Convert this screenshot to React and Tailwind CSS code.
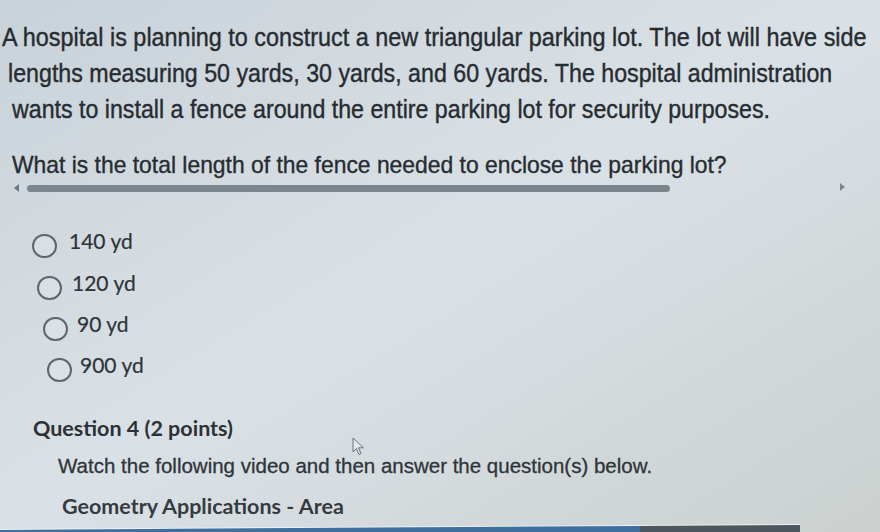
import React from "react";

const options = [
  { label: "140 yd", circle: "ml-[32px]", text: "ml-[12px]", top: "mt-[42px]" },
  { label: "120 yd", circle: "ml-[37px]", text: "ml-[10px]", top: "mt-[18px]" },
  { label: "90 yd", circle: "ml-[43px]", text: "ml-[9px]", top: "mt-[17px]" },
  { label: "900 yd", circle: "ml-[47px]", text: "ml-[8px]", top: "mt-[17px]" },
];

function Radio() {
  return (
    <span className="block w-[25px] h-[24px] shrink-0 rounded-full border-2 border-[#5f666c] bg-[#e3e8ec]/40"></span>
  );
}

export default function App() {
  return (
    <div className="relative w-[880px] h-[532px] overflow-hidden bg-linear-to-br from-[#c9d2d9] via-[#dae1e6] to-[#cbd0cf] text-[#272c31] font-['Liberation_Sans',Arial,sans-serif]">
      {/* Question text */}
      <div className="pt-[19px] text-[26px] leading-[36px] whitespace-nowrap [-webkit-text-stroke:0.4px_#272c31]">
        <div className="h-[36px] pl-[2px]">
          <span className="inline-block origin-left scale-x-[0.9]">
            A hospital is planning to construct a new triangular parking lot. The lot will have side
          </span>
        </div>
        <div className="h-[36px] pl-[8px]">
          <span className="inline-block origin-left scale-x-[0.893]">
            lengths measuring 50 yards, 30 yards, and 60 yards. The hospital administration
          </span>
        </div>
        <div className="h-[36px] pl-[12px]">
          <span className="inline-block origin-left scale-x-[0.892]">
            wants to install a fence around the entire parking lot for security purposes.
          </span>
        </div>
      </div>

      <div className="mt-[20px] h-[36px] pl-[12px] text-[24px] leading-[36px] whitespace-nowrap [-webkit-text-stroke:0.35px_#272c31]">
        <span className="inline-block origin-left scale-x-[0.953]">
          What is the total length of the fence needed to enclose the parking lot?
        </span>
      </div>

      {/* horizontal scrollbar */}
      <div className="flex items-center h-[8px] mt-[1px]">
        <svg className="ml-[14px]" width="5" height="8" viewBox="0 0 5 8">
          <path d="M5 0 L0 4 L5 8 Z" fill="#6f787f" />
        </svg>
        <div className="ml-[8px] w-[643px] h-[7px] rounded-full bg-[#7b858c]"></div>
        <svg className="ml-[170px] -mt-[3px]" width="5" height="8" viewBox="0 0 5 8">
          <path d="M0 0 L5 4 L0 8 Z" fill="#7d868c" />
        </svg>
      </div>

      {/* answer choices */}
      <div className="font-['Lato','Liberation_Sans',sans-serif] text-[21px] leading-[24px] text-[#2e3338] [-webkit-text-stroke:0.2px_#2e3338]">
        {options.map((o) => (
          <div key={o.label} className={`flex items-start h-[24px] ${o.top}`}>
            <span className={o.circle}>
              <Radio />
            </span>
            <span className={`${o.text} -mt-[5px] whitespace-nowrap`}>{o.label}</span>
          </div>
        ))}
      </div>

      <div className="mt-[34px] pl-[33px] h-[24px] font-['Lato','Liberation_Sans',sans-serif] font-bold text-[21.5px] leading-[24px] text-[#2c3136] whitespace-nowrap">
        Question 4 (2 points)
      </div>

      <div className="mt-[14px] pl-[58px] h-[24px] text-[20.5px] leading-[24px] whitespace-nowrap text-[#2f3439] [-webkit-text-stroke:0.3px_#2f3439]">
        Watch the following video and then answer the question(s) below.
      </div>

      <div className="mt-[16px] pl-[62px] h-[24px] font-['Lato','Liberation_Sans',sans-serif] font-bold text-[21.5px] leading-[24px] text-[#363b40] whitespace-nowrap">
        Geometry Applications - Area
      </div>

      {/* video player top edge */}
      <div className="mt-[6px] flex w-[800px] h-[12px] border-t border-[#eef1f3] origin-right -rotate-[0.35deg]">
        <div className="w-[640px] bg-[#3f6f9c]"></div>
        <div className="flex-1 bg-[#4d5760]"></div>
      </div>

      {/* mouse cursor */}
      <svg className="absolute left-[352px] top-[437px]" width="14" height="20" viewBox="0 0 14 20">
        <path d="M1 1 L1 15 L4.5 11.5 L7 17.5 L9 16.5 L6.5 10.8 L11.5 10.8 Z" fill="#e4e9ed" stroke="#6a7278" strokeWidth="1" strokeLinejoin="round" />
      </svg>
    </div>
  );
}
